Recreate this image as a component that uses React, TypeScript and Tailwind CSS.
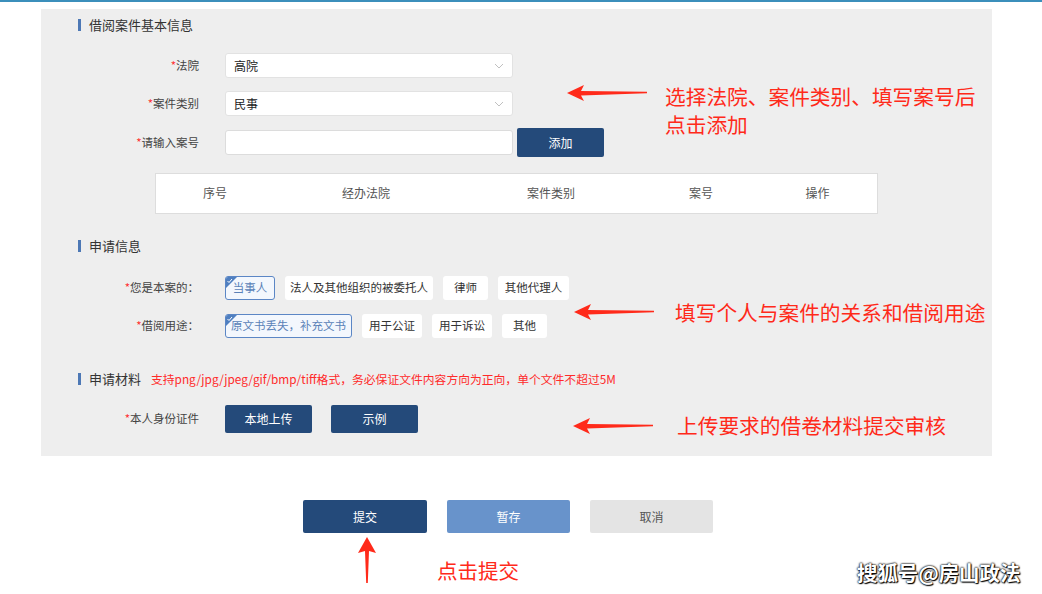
import React from 'react';

const FONT = { fontFamily: '"Noto Sans CJK SC", "Noto Sans", sans-serif' };

const SectionTitle: React.FC<{ title: string; children?: React.ReactNode }> = ({ title, children }) => (
    <div className="flex items-center h-[16px] pl-[37px]">
        <span className="w-[3px] h-[12px] bg-[#4d78b5]"></span>
        <span className="ml-[8px] text-[13px] leading-[16px] text-[#333]">{title}</span>
        {children}
    </div>
);

const Label: React.FC<{ text: string }> = ({ text }) => (
    <div className="w-[158px] shrink-0 text-right text-[11.5px] text-[#444] whitespace-nowrap">
        <span className="text-[#ff3030]">*</span>
        {text}
    </div>
);

const Chevron = () => (
    <svg width="10" height="6" viewBox="0 0 10 6" className="mr-[8px]">
        <path d="M1 1 L5 5 L9 1" fill="none" stroke="#c0c0c0" strokeWidth="1" />
    </svg>
);

const SelectBox: React.FC<{ value: string }> = ({ value }) => (
    <div className="ml-[26px] w-[288px] h-[25px] bg-white rounded-[3px] border border-[#e2e2e2] flex items-center justify-between pl-[8px]">
        <span className="text-[12px] text-[#222]">{value}</span>
        <Chevron />
    </div>
);

const Chip: React.FC<{ text: string; width: number; checked?: boolean }> = ({ text, width, checked }) => (
    <div
        className={`relative h-[24px] flex items-center justify-center rounded-[3px] text-[11.5px] whitespace-nowrap overflow-hidden ${
            checked ? 'bg-[#f3f7fd] border border-[#5b86c5] text-[#5a82b8]' : 'bg-white text-[#333]'
        }`}
        style={{ width }}
    >
        {checked && (
            <svg width="11" height="11" viewBox="0 0 11 11" className="absolute left-0 top-0">
                <path d="M0 0 H11 L0 11 Z" fill="#4f7fc0" />
                <path d="M1.5 4 L3 5.5 L6 2" fill="none" stroke="#fff" strokeWidth="1" />
            </svg>
        )}
        {text}
    </div>
);

const DarkButton: React.FC<{ text: string; className?: string }> = ({ text, className }) => (
    <div className={`w-[87px] h-[28px] bg-[#244a7a] rounded-[2px] flex items-center justify-center text-[12px] text-white ${className ?? ''}`}>
        {text}
    </div>
);

const LeftArrow: React.FC<{ className: string }> = ({ className }) => (
    <svg width="80" height="16" viewBox="0 0 80 16" className={className}>
        <polygon points="0,8 17,0 14,6 80,6.8 80,8.2 14,10.5 17,16" fill="#ff2a1a" />
    </svg>
);

const headers = [
    { t: '序号', w: 118 },
    { t: '经办法院', w: 184 },
    { t: '案件类别', w: 186 },
    { t: '案号', w: 114 },
    { t: '操作', w: 119 },
];

export default function App() {
    return (
        <div className="relative w-[1042px] h-[594px] bg-white overflow-hidden" style={FONT}>
            <div className="h-[2px] bg-[#3b8fbb]"></div>

            {/* Form panel */}
            <div className="ml-[41px] mt-[7px] w-[951px] h-[447px] bg-[#eeeeee] pt-[8px]">
                <SectionTitle title="借阅案件基本信息" />

                <div className="mt-[20px] flex items-center">
                    <Label text="法院" />
                    <SelectBox value="高院" />
                </div>
                <div className="mt-[13px] flex items-center">
                    <Label text="案件类别" />
                    <SelectBox value="民事" />
                </div>
                <div className="mt-[12px] flex items-center h-[29px]">
                    <Label text="请输入案号" />
                    <div className="ml-[26px] w-[288px] h-[25px] bg-white rounded-[3px] border border-[#dcdcdc]"></div>
                    <DarkButton text="添加" className="ml-[4px] h-[29px]" />
                </div>

                <div className="mt-[16px] ml-[114px] w-[723px] h-[41px] bg-white border border-[#dddddd] flex items-center">
                    {headers.map((h) => (
                        <div key={h.t} className="text-center text-[12px] leading-[16px] -mt-[2px] text-[#555]" style={{ width: h.w }}>
                            {h.t}
                        </div>
                    ))}
                </div>

                <div className="mt-[24px]">
                    <SectionTitle title="申请信息" />
                </div>

                <div className="mt-[22px] flex items-center">
                    <Label text="您是本案的：" />
                    <div className="ml-[26px] flex gap-[10px]">
                        <Chip text="当事人" width={50} checked />
                        <Chip text="法人及其他组织的被委托人" width={148} />
                        <Chip text="律师" width={45} />
                        <Chip text="其他代理人" width={71} />
                    </div>
                </div>
                <div className="mt-[14px] flex items-center">
                    <Label text="借阅用途：" />
                    <div className="ml-[26px] flex gap-[10px]">
                        <Chip text="原文书丢失，补充文书" width={127} checked />
                        <Chip text="用于公证" width={60} />
                        <Chip text="用于诉讼" width={60} />
                        <Chip text="其他" width={45} />
                    </div>
                </div>

                <div className="mt-[33px]">
                    <SectionTitle title="申请材料">
                        <span className="ml-[10px] text-[11.8px] text-[#ff2a2a] whitespace-nowrap">
                            支持png/jpg/jpeg/gif/bmp/tiff格式，务必保证文件内容方向为正向，单个文件不超过5M
                        </span>
                    </SectionTitle>
                </div>

                <div className="mt-[18px] flex items-center">
                    <Label text="本人身份证件" />
                    <DarkButton text="本地上传" className="ml-[26px]" />
                    <DarkButton text="示例" className="ml-[19px]" />
                </div>
            </div>

            {/* Bottom actions */}
            <div className="mt-[44px] ml-[303px] flex gap-[20px]">
                <div className="w-[124px] h-[33px] rounded-[2px] bg-[#244a7a] text-white text-[12px] flex items-center justify-center">提交</div>
                <div className="w-[123px] h-[33px] rounded-[2px] bg-[#6893cb] text-white text-[12px] flex items-center justify-center">暂存</div>
                <div className="w-[123px] h-[33px] rounded-[2px] bg-[#e4e4e4] text-[#555] text-[12px] flex items-center justify-center">取消</div>
            </div>

            {/* Annotations */}
            <LeftArrow className="absolute left-[567px] top-[85px]" />
            <div className="absolute left-[665px] top-[82px] text-[20.7px] leading-[28px] text-[#ff2a1a]">
                选择法院、案件类别、填写案号后
                <br />
                点击添加
            </div>

            <LeftArrow className="absolute left-[574px] top-[304px]" />
            <div className="absolute left-[675px] top-[298px] text-[20.7px] leading-[28px] text-[#ff2a1a] whitespace-nowrap">
                填写个人与案件的关系和借阅用途
            </div>

            <LeftArrow className="absolute left-[573px] top-[418px]" />
            <div className="absolute left-[677px] top-[411px] text-[20.7px] leading-[28px] text-[#ff2a1a] whitespace-nowrap">
                上传要求的借卷材料提交审核
            </div>

            <svg width="18" height="46" viewBox="0 0 18 46" className="absolute left-[358px] top-[537px]">
                <polygon points="9,0 18,16 11,14 9.8,46 8.2,46 7,14 0,16" fill="#ff2a1a" />
            </svg>
            <div className="absolute left-[437px] top-[556px] text-[20.5px] leading-[28px] text-[#ff2a1a] whitespace-nowrap">
                点击提交
            </div>

            <div
                className="absolute left-[857px] top-[558px] text-[20.4px] leading-[28px] font-bold text-white whitespace-nowrap"
                style={{ textShadow: '0 0 2px #000, 0 0 2px #000, 1px 1px 1px #000' }}
            >
                搜狐号@房山政法
            </div>
        </div>
    );
}
